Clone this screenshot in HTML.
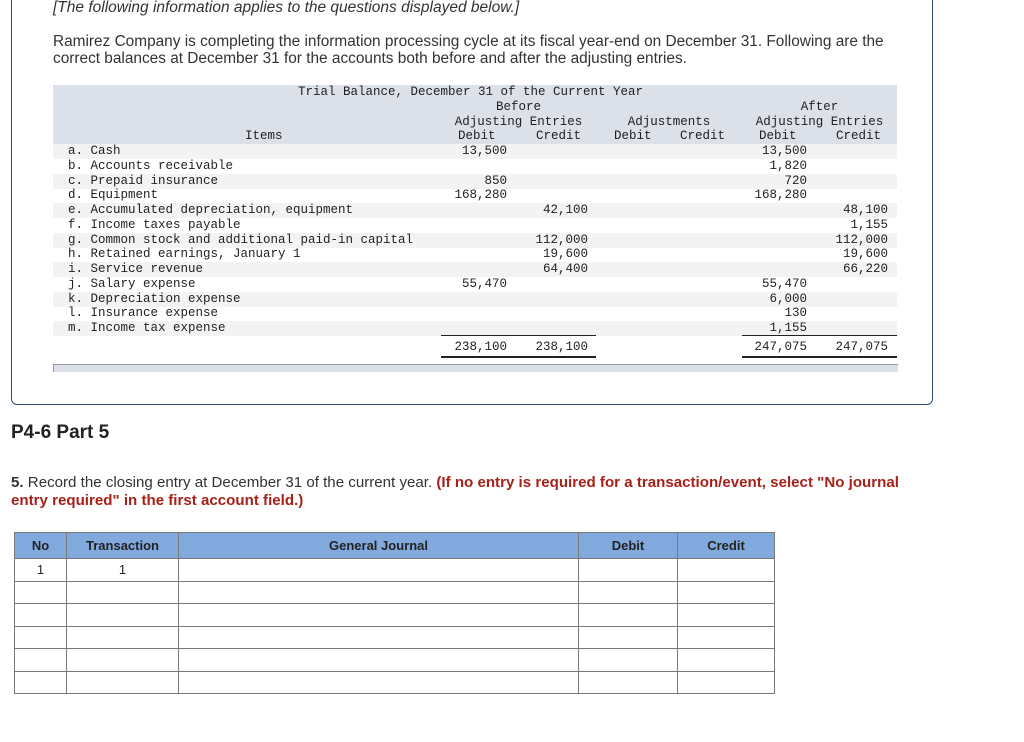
<!DOCTYPE html>
<html><head><meta charset="utf-8"><style>
body{margin:0;width:1024px;height:742px;background:#fff;position:relative;overflow:hidden;font-family:"Liberation Sans",Arial,sans-serif;color:#222}
.a{position:absolute;white-space:nowrap}
.box{position:absolute;left:11px;top:-10px;width:920px;height:413px;border:1.5px solid #2d4b80;border-radius:0 0 6px 6px}
.m{font-family:"Liberation Mono","Courier New",monospace;font-size:12.5px;color:#222}
.r{text-align:right}
.c{text-align:center}
.row{position:absolute;left:53px;width:844px;height:15px}
.hl{position:absolute;background:#222}
table.j{position:absolute;left:14px;top:532px;border-collapse:collapse;font-size:13px}
table.j td{border:1px solid #7a7a7a;height:21.5px;padding:0;text-align:center}
table.j tr.h td{background:#82a9de;font-weight:bold;height:25px}
</style></head><body>
<div class="box"></div>
<div class="a" style="left:53px;top:-1px;font-size:15.5px;font-style:italic;color:#333">[The following information applies to the questions displayed below.]</div>
<div class="a" style="left:53px;top:33px;font-size:15.4px;line-height:17px;color:#333">Ramirez Company is completing the information processing cycle at its fiscal year-end on December 31. Following are the<br>correct balances at December 31 for the accounts both before and after the adjusting entries.</div>

<div class="a" style="left:53px;top:85px;width:844px;height:59px;background:#dce0e9"></div>
<div class="row" style="top:144px;background:#f3f3f3"></div>
<div class="row" style="top:173.5px;background:#f3f3f3"></div>
<div class="row" style="top:203px;background:#f3f3f3"></div>
<div class="row" style="top:232.5px;background:#f3f3f3"></div>
<div class="row" style="top:262px;background:#f3f3f3"></div>
<div class="row" style="top:291.5px;background:#f3f3f3"></div>
<div class="row" style="top:321px;background:#f3f3f3"></div>
<div class="a" style="left:53px;top:364px;width:844px;height:7px;background:#dce0e9;border-top:1px solid #999;border-left:1px solid #999"></div>

<div class="a m" style="left:298px;top:85px">Trial Balance, December 31 of the Current Year</div>
<div class="a m c" style="left:441px;width:155px;top:100px">Before</div>
<div class="a m c" style="left:441px;width:155px;top:114.5px">Adjusting Entries</div>
<div class="a m c" style="left:742px;width:155px;top:100px">After</div>
<div class="a m c" style="left:742px;width:155px;top:114.5px">Adjusting Entries</div>
<div class="a m c" style="left:596px;width:146px;top:114.5px">Adjustments</div>
<div class="a m" style="left:245px;top:129px">Items</div>
<div class="a m" style="left:458px;top:129px">Debit</div>
<div class="a m" style="left:536px;top:129px">Credit</div>
<div class="a m" style="left:614px;top:129px">Debit</div>
<div class="a m" style="left:680px;top:129px">Credit</div>
<div class="a m" style="left:759px;top:129px">Debit</div>
<div class="a m" style="left:836px;top:129px">Credit</div>

<div class="a m" style="left:68px;top:144px;line-height:14.77px">a. Cash<br>b. Accounts receivable<br>c. Prepaid insurance<br>d. Equipment<br>e. Accumulated depreciation, equipment<br>f. Income taxes payable<br>g. Common stock and additional paid-in capital<br>h. Retained earnings, January 1<br>i. Service revenue<br>j. Salary expense<br>k. Depreciation expense<br>l. Insurance expense<br>m. Income tax expense</div>
<div class="a m r" style="left:420px;width:87px;top:144px;line-height:14.77px">13,500<br>&nbsp;<br>850<br>168,280<br>&nbsp;<br>&nbsp;<br>&nbsp;<br>&nbsp;<br>&nbsp;<br>55,470</div>
<div class="a m r" style="left:500px;width:88px;top:144px;line-height:14.77px">&nbsp;<br>&nbsp;<br>&nbsp;<br>&nbsp;<br>42,100<br>&nbsp;<br>112,000<br>19,600<br>64,400</div>
<div class="a m r" style="left:720px;width:87px;top:144px;line-height:14.77px">13,500<br>1,820<br>720<br>168,280<br>&nbsp;<br>&nbsp;<br>&nbsp;<br>&nbsp;<br>&nbsp;<br>55,470<br>6,000<br>130<br>1,155</div>
<div class="a m r" style="left:800px;width:88px;top:144px;line-height:14.77px">&nbsp;<br>&nbsp;<br>&nbsp;<br>&nbsp;<br>48,100<br>1,155<br>112,000<br>19,600<br>66,220</div>

<div class="hl" style="left:441px;top:335px;width:155px;height:1px"></div>
<div class="hl" style="left:742px;top:335px;width:155px;height:1px"></div>
<div class="a m r" style="left:420px;width:87px;top:340px">238,100</div>
<div class="a m r" style="left:500px;width:88px;top:340px">238,100</div>
<div class="a m r" style="left:720px;width:87px;top:340px">247,075</div>
<div class="a m r" style="left:800px;width:88px;top:340px">247,075</div>
<div class="hl" style="left:441px;top:356px;width:155px;height:2px"></div>
<div class="hl" style="left:742px;top:356px;width:155px;height:2px"></div>

<div class="a" style="left:11px;top:422px;font-size:19px;font-weight:bold;color:#222">P4-6 Part 5</div>
<div class="a" style="left:11px;top:474px;font-size:15.1px;line-height:17.5px;color:#333"><b>5.</b> Record the closing entry at December 31 of the current year. <b style="color:#a8201a">(If no entry is required for a transaction/event, select "No journal<br>entry required" in the first account field.)</b></div>

<table class="j">
<tr class="h"><td style="width:51px">No</td><td style="width:111px">Transaction</td><td style="width:399px">General Journal</td><td style="width:98px">Debit</td><td style="width:96px">Credit</td></tr>
<tr><td>1</td><td>1</td><td></td><td></td><td></td></tr>
<tr><td></td><td></td><td></td><td></td><td></td></tr>
<tr><td></td><td></td><td></td><td></td><td></td></tr>
<tr><td></td><td></td><td></td><td></td><td></td></tr>
<tr><td></td><td></td><td></td><td></td><td></td></tr>
<tr><td></td><td></td><td></td><td></td><td></td></tr>
</table>
</body></html>
